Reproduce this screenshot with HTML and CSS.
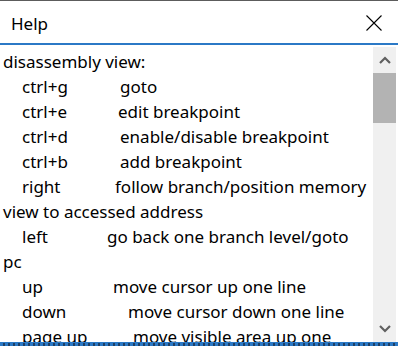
FILE: index.html
```html
<!DOCTYPE html>
<html lang="en">
<head>
    <meta charset="UTF-8">
    <title>Help</title>
    <link rel="stylesheet" href="styles.css">
</head>
<body>
    <div class="window">
        <div class="titlebar">
            <span class="title">Help</span>
            <svg class="close" width="16" height="16" viewBox="0 0 16 16">
                <path d="M0.5 0.5 L15.5 15.5 M15.5 0.5 L0.5 15.5" stroke="#000" stroke-width="1.1" fill="none"/>
            </svg>
        </div>
        <div class="content">
            <div class="text">
                <div class="line">disassembly view:</div>
                <div class="row"><span class="key k98">ctrl+g</span><span>goto</span></div>
                <div class="row"><span class="key k96">ctrl+e</span><span>edit breakpoint</span></div>
                <div class="row"><span class="key k98">ctrl+d</span><span>enable/disable breakpoint</span></div>
                <div class="row"><span class="key k98">ctrl+b</span><span>add breakpoint</span></div>
                <div class="row"><span class="key k93">right</span><span>follow branch/position memory</span></div>
                <div class="line">view to accessed address</div>
                <div class="row"><span class="key k85">left</span><span>go back one branch level/goto</span></div>
                <div class="line">pc</div>
                <div class="row"><span class="key k91">up</span><span>move cursor up one line</span></div>
                <div class="row"><span class="key k106">down</span><span>move cursor down one line</span></div>
                <div class="row"><span class="key k111">page up</span><span>move visible area up one</span></div>
            </div>
            <div class="scrollbar">
                <div class="arrow">
                    <svg width="12" height="8" viewBox="0 0 12 8"><path d="M1 7 L6 2 L11 7" stroke="#606060" stroke-width="2.2" fill="none"/></svg>
                </div>
                <div class="thumb"></div>
                <div class="track"></div>
                <div class="arrow">
                    <svg width="12" height="8" viewBox="0 0 12 8"><path d="M1 1 L6 6 L11 1" stroke="#606060" stroke-width="2.2" fill="none"/></svg>
                </div>
            </div>
        </div>
        <div class="focus"></div>
    </div>
</body>
</html>
```

FILE: styles.css
```css
body {
    margin: 0;
    background-color: #fff;
    font-family: 'Noto Sans', 'Open Sans', sans-serif;
    color: #000;
    overflow: hidden;
}

.window {
    width: 398px;
    height: 346px;
    display: flex;
    flex-direction: column;
    border-top: 1px solid #5c5c5c;
    box-sizing: border-box;
}

.titlebar {
    height: 42px;
    display: flex;
    align-items: center;
    justify-content: space-between;
    padding: 0 16px 0 11px;
    border-bottom: 2px solid #2b79c6;
}

.title {
    font-size: 17px;
    padding-top: 2px;
}

.close {
    margin-top: 2px;
}

.content {
    flex: 1;
    display: flex;
    overflow: hidden;
}

.text {
    flex: 1;
    padding: 4px 0 0 3px;
    font-size: 17px;
    line-height: 25px;
    white-space: nowrap;
    overflow: hidden;
}

.row {
    display: flex;
    padding-left: 19px;
}

.key {
    flex-shrink: 0;
}

.k85 { width: 85px; }
.k91 { width: 91px; }
.k93 { width: 93px; }
.k96 { width: 96px; }
.k98 { width: 98px; }
.k106 { width: 106px; }
.k111 { width: 111px; }

.scrollbar {
    width: 23px;
    margin: 2px 2px 0 0;
    background-color: #f0f0f0;
    display: flex;
    flex-direction: column;
}

.arrow {
    height: 26px;
    display: flex;
    align-items: center;
    justify-content: center;
}

.thumb {
    height: 50px;
    background-color: #b3b3b3;
}

.track {
    flex: 1;
}

.focus {
    height: 3px;
    background: repeating-linear-gradient(to right, #2b79c6 0 3px, #1c3f66 3px 5px);
    border-top: 1px solid #2b79c6;
}
```
